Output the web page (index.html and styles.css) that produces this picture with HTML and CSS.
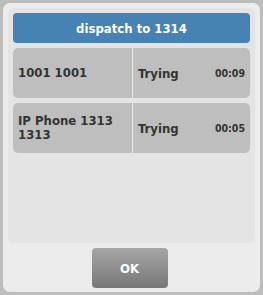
FILE: index.html
```html
<!DOCTYPE html>
<html>
<head>
<meta charset="utf-8">
<link rel="stylesheet" href="styles.css">
</head>
<body>
<div class="dialog">
  <div class="panel">
    <div class="header">dispatch to 1314</div>
    <div class="row">
      <div class="name">1001 1001</div>
      <div class="status"><span class="state">Trying</span><span class="time">00:09</span></div>
    </div>
    <div class="row">
      <div class="name">IP Phone 1313 1313</div>
      <div class="status"><span class="state">Trying</span><span class="time">00:05</span></div>
    </div>
  </div>
  <div class="footer">
    <button class="ok">OK</button>
  </div>
</div>
</body>
</html>
```
FILE: styles.css
```css
html, body {
  margin: 0;
  padding: 0;
}
body {
  background: #bdbdbd;
  padding: 3px;
  font-family: "DejaVu Sans Condensed", "DejaVu Sans", sans-serif;
  font-weight: bold;
}
.dialog {
  width: 257px;
  height: 289px;
  box-sizing: border-box;
  background: #ececec;
  border-radius: 7px;
  padding: 5px 5px 0 5px;
  display: flex;
  flex-direction: column;
}
.panel {
  height: 235px;
  box-sizing: border-box;
  background: #e4e4e4;
  border-radius: 6px;
  padding: 5px;
  display: flex;
  flex-direction: column;
  gap: 5px;
}
.header {
  height: 30px;
  background: #4682b4;
  border-radius: 4px;
  color: #fff;
  font-size: 13px;
  display: flex;
  align-items: center;
  justify-content: center;
}
.row {
  height: 50px;
  background: #bebebe;
  border-radius: 5px;
  display: flex;
  color: #333;
}
.name {
  width: 120px;
  box-sizing: border-box;
  padding: 0 4px 0 5px;
  border-right: 1px solid #e6e6e6;
  display: flex;
  align-items: center;
  font-size: 13px;
  line-height: 14px;
}
.status {
  flex: 1;
  display: flex;
  align-items: center;
  justify-content: space-between;
  padding: 0 5px 0 5px;
}
.state {
  font-size: 13px;
}
.time {
  font-size: 10.5px;
}
.footer {
  display: flex;
  justify-content: center;
  padding-top: 5px;
  padding-right: 4px;
}
.ok {
  width: 76px;
  height: 40px;
  border: none;
  border-radius: 4px;
  background: linear-gradient(#a6a6a6, #777777);
  color: #fff;
  font-family: "DejaVu Sans Condensed", "DejaVu Sans", sans-serif;
  font-weight: bold;
  font-size: 13px;
  padding: 0;
}
```
